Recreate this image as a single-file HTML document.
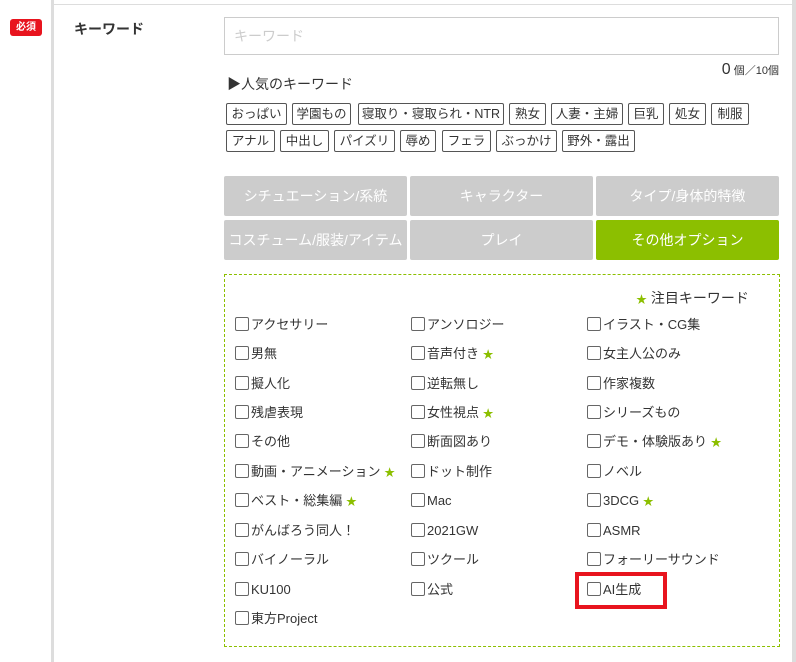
<!DOCTYPE html>
<html><head><meta charset="utf-8"><style>
*{box-sizing:border-box;margin:0;padding:0}
body{width:796px;height:662px;background:#fff;position:relative;overflow:hidden;font-family:"Liberation Sans","Noto Sans CJK JP",sans-serif;color:#333;font-size:13px}
.a{position:absolute}
.tag{position:absolute;height:22px;border:1px solid #555;border-radius:2px;font-size:12.5px;line-height:20px;text-align:center;color:#333;white-space:nowrap}
.btn{position:absolute;height:40px;width:183px;background:#ccc;color:#fff;font-size:14px;line-height:40px;text-align:center;border-radius:2px}
.cb{position:absolute;font-size:13px;line-height:16px;white-space:nowrap;color:#333}
.cb:before{content:"";display:inline-block;width:12px;height:12px;border:1px solid #666;border-radius:2px;vertical-align:-2px;margin-right:2px;background:#fff}
.s{color:#8cbf00;font-size:11px}
</style></head><body>
<div class="a" style="left:51px;top:0;width:3px;height:662px;background:#ddd"></div>
<div class="a" style="left:792px;top:0;width:4px;height:662px;background:#ddd"></div>
<div class="a" style="left:54px;top:4px;width:738px;height:1px;background:#ddd"></div>
<div class="a" style="left:10px;top:19px;width:32px;height:17px;background:#e8141e;border-radius:3px;color:#fff;font-size:10px;line-height:17px;text-align:center;font-weight:bold">必須</div>
<div class="a" style="left:74px;top:19px;font-size:14px;font-weight:bold;color:#333">キーワード</div>
<div class="a" style="left:224px;top:17px;width:555px;height:38px;border:1px solid #ccc;color:#ccc;font-size:14px;line-height:36px;padding-left:9px">キーワード</div>
<div class="a" style="right:17px;top:61px;font-size:16px;color:#333">0<span style="font-size:11px"> 個／10個</span></div>
<div class="a" style="left:227px;top:74px;font-size:14px">▶人気のキーワード</div>
<div class="tag" style="left:226px;top:103px;width:61px">おっぱい</div>
<div class="tag" style="left:292px;top:103px;width:59px">学園もの</div>
<div class="tag" style="left:358px;top:103px;width:146px">寝取り・寝取られ・NTR</div>
<div class="tag" style="left:509px;top:103px;width:37px">熟女</div>
<div class="tag" style="left:551px;top:103px;width:72px">人妻・主婦</div>
<div class="tag" style="left:628px;top:103px;width:36px">巨乳</div>
<div class="tag" style="left:669px;top:103px;width:37px">処女</div>
<div class="tag" style="left:711px;top:103px;width:38px">制服</div>
<div class="tag" style="left:226px;top:130px;width:49px">アナル</div>
<div class="tag" style="left:280px;top:130px;width:49px">中出し</div>
<div class="tag" style="left:334px;top:130px;width:61px">パイズリ</div>
<div class="tag" style="left:400px;top:130px;width:36px">辱め</div>
<div class="tag" style="left:442px;top:130px;width:49px">フェラ</div>
<div class="tag" style="left:496px;top:130px;width:61px">ぶっかけ</div>
<div class="tag" style="left:562px;top:130px;width:73px">野外・露出</div>
<div class="btn" style="left:224px;top:176px">シチュエーション/系統</div>
<div class="btn" style="left:410px;top:176px">キャラクター</div>
<div class="btn" style="left:596px;top:176px">タイプ/身体的特徴</div>
<div class="btn" style="left:224px;top:220px">コスチューム/服装/アイテム</div>
<div class="btn" style="left:410px;top:220px">プレイ</div>
<div class="btn" style="left:596px;top:220px;background:#8cbf00">その他オプション</div>
<div class="a" style="left:224px;top:274px;width:556px;height:373px;border:1px dashed #8cbf00"></div>
<div class="a" style="left:636px;top:288px;font-size:14px"><span class="s">★</span> 注目キーワード</div>
<div class="a" style="left:575px;top:572px;width:92px;height:37px;border:4px solid #e8141e"></div>
<div class="cb" style="left:235px;top:317px">アクセサリー</div>
<div class="cb" style="left:411px;top:317px">アンソロジー</div>
<div class="cb" style="left:587px;top:317px">イラスト・CG集</div>
<div class="cb" style="left:235px;top:346px">男無</div>
<div class="cb" style="left:411px;top:346px">音声付き <span class="s">★</span></div>
<div class="cb" style="left:587px;top:346px">女主人公のみ</div>
<div class="cb" style="left:235px;top:376px">擬人化</div>
<div class="cb" style="left:411px;top:376px">逆転無し</div>
<div class="cb" style="left:587px;top:376px">作家複数</div>
<div class="cb" style="left:235px;top:405px">残虐表現</div>
<div class="cb" style="left:411px;top:405px">女性視点 <span class="s">★</span></div>
<div class="cb" style="left:587px;top:405px">シリーズもの</div>
<div class="cb" style="left:235px;top:434px">その他</div>
<div class="cb" style="left:411px;top:434px">断面図あり</div>
<div class="cb" style="left:587px;top:434px">デモ・体験版あり <span class="s">★</span></div>
<div class="cb" style="left:235px;top:464px">動画・アニメーション <span class="s">★</span></div>
<div class="cb" style="left:411px;top:464px">ドット制作</div>
<div class="cb" style="left:587px;top:464px">ノベル</div>
<div class="cb" style="left:235px;top:493px">ベスト・総集編 <span class="s">★</span></div>
<div class="cb" style="left:411px;top:493px">Mac</div>
<div class="cb" style="left:587px;top:493px">3DCG <span class="s">★</span></div>
<div class="cb" style="left:235px;top:523px">がんばろう同人！</div>
<div class="cb" style="left:411px;top:523px">2021GW</div>
<div class="cb" style="left:587px;top:523px">ASMR</div>
<div class="cb" style="left:235px;top:552px">バイノーラル</div>
<div class="cb" style="left:411px;top:552px">ツクール</div>
<div class="cb" style="left:587px;top:552px">フォーリーサウンド</div>
<div class="cb" style="left:235px;top:582px">KU100</div>
<div class="cb" style="left:411px;top:582px">公式</div>
<div class="cb" style="left:587px;top:582px">AI生成</div>
<div class="cb" style="left:235px;top:611px">東方Project</div>
</body></html>
